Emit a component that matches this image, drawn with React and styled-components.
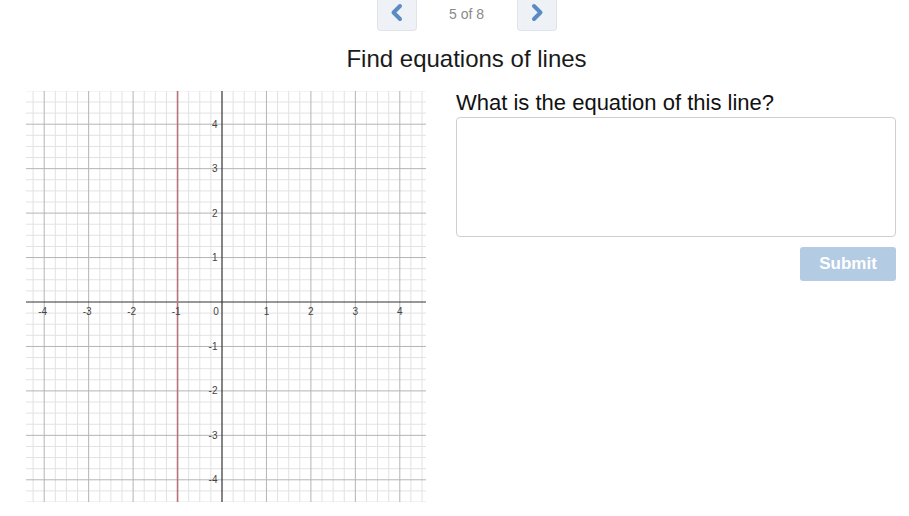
import React from "react";
import styled, { createGlobalStyle } from "styled-components";

const Global = createGlobalStyle`
  html, body { margin: 0; padding: 0; background: #fff; }
  body { font-family: "Liberation Sans", Arial, sans-serif; color: #222; }
`;

const Page = styled.div`
  width: 881px;
  margin-left: 26px;
  display: flex;
  flex-direction: column;
`;

const Nav = styled.div`
  display: flex;
  justify-content: center;
  align-items: flex-start;
  height: 31px;
`;

const NavButton = styled.button`
  width: 40px;
  height: 31px;
  padding: 0;
  border: 1px solid #dfe4ea;
  border-top: none;
  border-radius: 0 0 4px 4px;
  background: #eef2f7;
  display: flex;
  align-items: flex-start;
  justify-content: center;
  padding-top: 2px;
  box-sizing: border-box;
  cursor: pointer;
`;

const Counter = styled.div`
  width: 100px;
  text-align: center;
  font-size: 14px;
  color: #8a8a8a;
  line-height: 28px;
`;

const Title = styled.h1`
  margin: 14px 0 0;
  text-align: center;
  font-size: 24px;
  font-weight: normal;
  color: #1a1a1a;
  line-height: 28px;
`;

const Main = styled.div`
  display: flex;
  align-items: flex-start;
  gap: 30px;
  margin-top: 18px;
`;

const GraphBox = styled.div`
  width: 400px;
  height: 411px;
  flex: none;
`;

const Side = styled.div`
  width: 440px;
  display: flex;
  flex-direction: column;
`;

const Question = styled.div`
  font-size: 22px;
  color: #111;
  line-height: 24px;
`;

const Answer = styled.textarea`
  margin-top: 2px;
  width: 440px;
  height: 120px;
  box-sizing: border-box;
  border: 1px solid #cfcfcf;
  border-radius: 4px;
  resize: none;
  font-family: inherit;
  font-size: 16px;
  outline: none;
`;

const Actions = styled.div`
  display: flex;
  justify-content: flex-end;
  margin-top: 10px;
`;

const SubmitButton = styled.button`
  width: 96px;
  height: 34px;
  border: none;
  border-radius: 3px;
  background: #b3cbe3;
  color: #fff;
  font-family: "Liberation Sans", Arial, sans-serif;
  font-weight: bold;
  font-size: 17px;
  cursor: default;
`;

const Chevron = ({ dir }) => (
  <svg width="16" height="20" viewBox="0 0 16 20">
    <path
      d={dir === "left" ? "M11 4 L4.5 10.5 L11 17" : "M5 4 L11.5 10.5 L5 17"}
      fill="none"
      stroke="#5b8bc3"
      strokeWidth="4"
      strokeLinecap="round"
      strokeLinejoin="round"
    />
  </svg>
);

const W = 400;
const H = 411;
const OX = 196;
const OY = 211;
const U = 44.45;
const M = U / 4;
const MAJOR = "#b4b4b4";
const MINOR = "#e2e2e2";

function Graph() {
  const minor = [];
  const major = [];
  for (let k = -17; k <= 18; k++) {
    if (k === 0) continue;
    const x = OX + k * M;
    const isMajor = k % 4 === 0;
    (isMajor ? major : minor).push(
      <line key={"v" + k} x1={x} y1={0} x2={x} y2={H}
        stroke={isMajor ? MAJOR : MINOR} strokeWidth="1" />
    );
  }
  for (let k = -18; k <= 19; k++) {
    if (k === 0) continue;
    const y = OY - k * M;
    const isMajor = k % 4 === 0;
    (isMajor ? major : minor).push(
      <line key={"h" + k} x1={0} y1={y} x2={W} y2={y}
        stroke={isMajor ? MAJOR : MINOR} strokeWidth="1" />
    );
  }
  const xl = [];
  const yl = [];
  for (let n = -4; n <= 4; n++) {
    if (n === 0) continue;
    const x = OX + n * U;
    xl.push(
      <text key={"xl" + n} x={n < 0 ? x + 3 : x} y={OY + 13}
        textAnchor={n < 0 ? "end" : "middle"}>{n}</text>
    );
    const y = OY - n * U;
    yl.push(
      <text key={"yl" + n} x={OX - 4.5} y={y + 3.5} textAnchor="end">{n}</text>
    );
  }
  return (
    <svg width={W} height={H} viewBox={`0 0 ${W} ${H}`}>
      {minor}
      {major}
      <line x1={0} y1={OY} x2={W} y2={OY} stroke="#333" strokeWidth="1.2" />
      <line x1={OX} y1={0} x2={OX} y2={H} stroke="#333" strokeWidth="1.2" />
      <line x1={OX - U} y1={0} x2={OX - U} y2={H} stroke="#b8737a" strokeWidth="1.6" />
      <g fontFamily="'Liberation Sans', Arial, sans-serif" fontSize="10" fill="#444">
        {xl}
        {yl}
        <text x={OX - 6} y={OY + 13} textAnchor="middle">0</text>
      </g>
    </svg>
  );
}

export default function App() {
  return (
    <>
      <Global />
      <Page>
        <Nav>
          <NavButton aria-label="Previous"><Chevron dir="left" /></NavButton>
          <Counter>5 of 8</Counter>
          <NavButton aria-label="Next"><Chevron dir="right" /></NavButton>
        </Nav>
        <Title>Find equations of lines</Title>
        <Main>
          <GraphBox><Graph /></GraphBox>
          <Side>
            <Question>What is the equation of this line?</Question>
            <Answer />
            <Actions>
              <SubmitButton>Submit</SubmitButton>
            </Actions>
          </Side>
        </Main>
      </Page>
    </>
  );
}
